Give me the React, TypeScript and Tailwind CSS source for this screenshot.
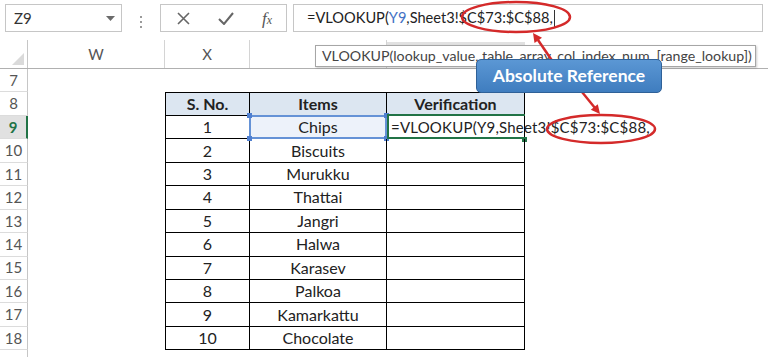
import React from 'react';

const items = [
  'Chips',
  'Biscuits',
  'Murukku',
  'Thattai',
  'Jangri',
  'Halwa',
  'Karasev',
  'Palkoa',
  'Kamarkattu',
  'Chocolate',
];

const Handle = ({ className, color }: { className: string; color: string }) => (
  <span className={`absolute w-[5px] h-[5px] ${color} ${className}`} />
);

const RowHeader = ({ n, active }: { n: number; active?: boolean }) => (
  <div
    className={`w-[28px] shrink-0 flex items-center justify-center border-b border-[#dcdcdc] text-[15px] ${
      active
        ? 'bg-[#e1e1e1] text-[#217346] font-bold border-r-2 border-r-[#217346]'
        : 'text-[#555] border-r border-r-[#c6c6c6]'
    }`}
  >
    {n}
  </div>
);

const App = () => {
  return (
    <div className="relative w-[768px] h-[357px] bg-white overflow-hidden font-['Lato','Noto_Sans',sans-serif] text-[#222]">
      {/* Toolbar */}
      <div className="flex h-[40px] pt-[4px] pl-[5px] pr-[5px]">
        <div className="w-[117px] h-[28px] border border-[#c6c6c6] flex items-center justify-between pl-[8px] pr-[6px] text-[15px] text-[#333]">
          <span>Z9</span>
          <svg width="9" height="5" viewBox="0 0 9 5">
            <path d="M0 0 L9 0 L4.5 5 Z" fill="#6b6b6b" />
          </svg>
        </div>
        <div className="w-[38px] flex flex-col items-center justify-center gap-[3px]">
          <span className="w-[2px] h-[2px] bg-[#9a9a9a]" />
          <span className="w-[2px] h-[2px] bg-[#9a9a9a]" />
          <span className="w-[2px] h-[2px] bg-[#9a9a9a]" />
        </div>
        <div className="w-[127px] h-[28px] border border-[#c6c6c6] flex items-center justify-between pl-[16px] pr-[14px]">
          <svg width="13" height="13" viewBox="0 0 13 13">
            <path d="M1 1 L12 12 M12 1 L1 12" stroke="#666" strokeWidth="1.6" />
          </svg>
          <svg width="16" height="13" viewBox="0 0 16 13">
            <path d="M1 7 L6 12 L15 1" stroke="#666" strokeWidth="2" fill="none" />
          </svg>
          <span className="font-['Liberation_Serif',serif] italic text-[#555] text-[17px] leading-none">
            f<span className="text-[12px]">x</span>
          </span>
        </div>
        <div className="flex-1 ml-[6px] h-[28px] border border-[#c6c6c6] flex items-center pl-[13px] text-[14.6px] text-[#222] whitespace-nowrap">
          <span>=VLOOKUP(</span>
          <span className="text-[#4472c4]">Y9</span>
          <span>,Sheet3!$C$73:$C$88,</span>
          <span className="w-px h-[17px] bg-[#333] ml-px" />
        </div>
      </div>

      {/* Column headers */}
      <div className="flex h-[29px] border-b border-[#b0b0b0] text-[15px] text-[#555]">
        <div className="w-[28px] shrink-0 border-r border-[#c6c6c6] flex items-end justify-end pr-[3px] pb-[3px]">
          <svg width="12" height="12" viewBox="0 0 12 12">
            <path d="M12 0 L12 12 L0 12 Z" fill="#dadada" />
          </svg>
        </div>
        <div className="w-[137px] shrink-0 border-r border-[#d4d4d4] flex items-center justify-center">W</div>
        <div className="w-[85px] shrink-0 border-r border-[#d4d4d4] flex items-center justify-center">X</div>
        <div className="w-[137px] shrink-0 border-r border-[#d4d4d4]" />
        <div className="w-[138px] shrink-0 flex items-start">
          <div className="w-full h-[7px] mt-[2px] bg-[#e1e1e1]" />
        </div>
        <div className="flex-1" />
      </div>

      {/* Row 7 */}
      <div className="flex h-[23.45px]">
        <RowHeader n={7} />
        <div className="flex-1" />
      </div>

      {/* Row 8 - table header */}
      <div className="flex h-[23.45px]">
        <RowHeader n={8} />
        <div className="w-[137px] shrink-0" />
        <div className="w-[85px] shrink-0 bg-[#dce6f1] border border-black flex items-center justify-center font-bold text-[16px]">
          S. No.
        </div>
        <div className="w-[137px] shrink-0 bg-[#dce6f1] border-y border-r border-black flex items-center justify-center font-bold text-[16px]">
          Items
        </div>
        <div className="w-[138px] shrink-0 bg-[#dce6f1] border-y border-r border-black flex items-center justify-center font-bold text-[16px]">
          Verification
        </div>
        <div className="flex-1" />
      </div>

      {/* Rows 9-18 */}
      {items.map((item, i) => {
        const n = i + 9;
        const first = i === 0;
        return (
          <div key={item} className="flex h-[23.45px]">
            <RowHeader n={n} active={first} />
            <div className="w-[137px] shrink-0" />
            <div className="w-[85px] shrink-0 border-x border-b border-black flex items-center justify-center text-[16px]">
              {i + 1}
            </div>
            <div
              className={`relative w-[137px] shrink-0 border-r border-b border-black flex items-center justify-center text-[16px] ${
                first ? 'bg-[#edf2fa]' : ''
              }`}
            >
              {item}
              {first && (
                <>
                  <span className="absolute -left-px -top-px -right-px -bottom-px border-2 border-[#6592d6]" />
                  <Handle color="bg-[#4f7fd0]" className="-left-[3px] -top-[3px]" />
                  <Handle color="bg-[#4f7fd0]" className="-right-[3px] -top-[3px]" />
                  <Handle color="bg-[#4f7fd0]" className="-left-[3px] -bottom-[3px]" />
                  <Handle color="bg-[#4f7fd0]" className="-right-[3px] -bottom-[3px]" />
                </>
              )}
            </div>
            <div className="relative w-[138px] shrink-0 border-r border-b border-black">
              {first && (
                <>
                  <span className="absolute left-0 -top-[2px] right-[-1px] -bottom-[1px] border-y-2 border-l-2 border-[#217346]" />
                  <span className="absolute -right-[3px] -bottom-[4px] w-[5px] h-[5px] bg-[#217346]" />
                  <span className="absolute left-[4px] top-0 bottom-0 flex items-center whitespace-nowrap text-[15px] tracking-[0.2px] z-10">
                    =VLOOKUP(Y9,Sheet3!$C$73:$C$88,
                  </span>
                </>
              )}
            </div>
            <div className="flex-1" />
          </div>
        );
      })}

      <div className="flex h-[10px]">
        <div className="w-[28px] border-r border-[#c6c6c6]" />
      </div>

      {/* Function tooltip */}
      <div className="absolute left-[315px] top-[45px] w-[441px] h-[22px] bg-white border border-[#a6a6a6] shadow-[1px_1px_2px_rgba(0,0,0,0.2)] flex items-center pl-[6px] text-[14.2px] text-[#444] whitespace-nowrap z-10">
        VLOOKUP(lookup_value, table_array, col_index_num, [range_lookup])
      </div>

      {/* Annotations */}
      <svg className="absolute left-0 top-0 z-20 pointer-events-none" width="768" height="357" viewBox="0 0 768 357">
        <ellipse cx="516" cy="17" rx="54" ry="15" fill="none" stroke="#d42a2a" strokeWidth="2.5" />
        <ellipse cx="601" cy="129" rx="54" ry="14" fill="none" stroke="#d42a2a" strokeWidth="2.5" />
        <line x1="553" y1="62" x2="538" y2="40" stroke="#d42a2a" strokeWidth="2.5" />
        <polygon points="533,33 542,37.8 534.5,43" fill="#d42a2a" />
        <line x1="582" y1="92" x2="595" y2="108" stroke="#d42a2a" strokeWidth="2.5" />
        <polygon points="600,114 597.8,104.2 590.8,109.8" fill="#d42a2a" />
      </svg>

      <div className="absolute left-[476px] top-[59px] w-[186px] h-[34px] rounded-[5px] border border-[#2f6198] bg-gradient-to-b from-[#5b97d4] to-[#3f7dbf] flex items-center justify-center text-white font-bold text-[17.5px] z-30">
        Absolute Reference
      </div>
    </div>
  );
};

export default App;
